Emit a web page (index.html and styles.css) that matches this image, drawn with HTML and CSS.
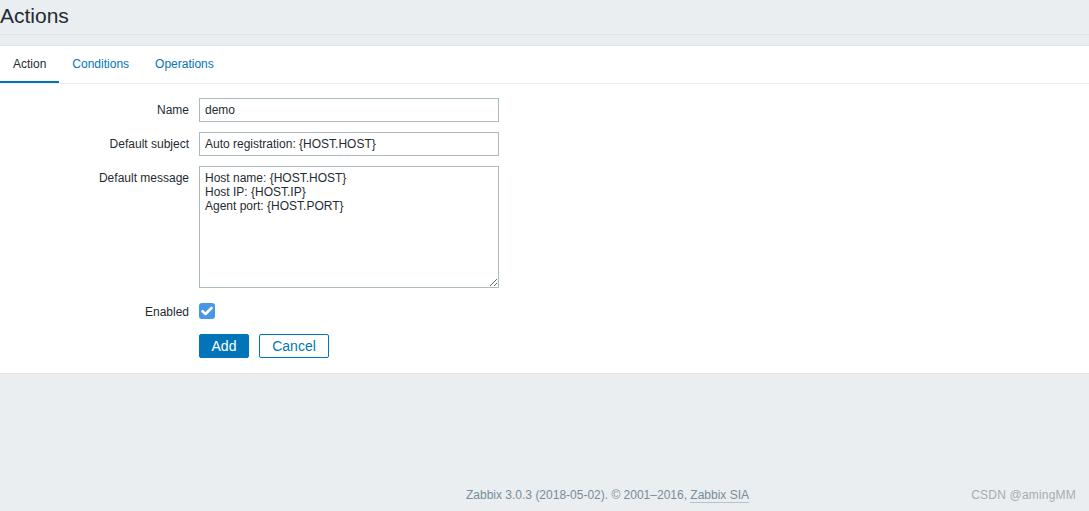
FILE: index.html
```html
<!DOCTYPE html>
<html>
<head>
<meta charset="utf-8">
<link rel="stylesheet" href="styles.css">
</head>
<body>
<div class="page">
  <header class="header"><h1 class="title">Actions</h1></header>
  <main class="panel">
    <nav class="tabs">
      <a class="tab active">Action</a>
      <a class="tab">Conditions</a>
      <a class="tab">Operations</a>
    </nav>
    <form class="form">
      <label class="label">Name</label>
      <input class="input" type="text" value="demo">
      <label class="label">Default subject</label>
      <input class="input" type="text" value="Auto registration: {HOST.HOST}">
      <label class="label top">Default message</label>
      <textarea class="textarea">Host name: {HOST.HOST}
Host IP: {HOST.IP}
Agent port: {HOST.PORT}</textarea>
      <label class="label check-label">Enabled</label>
      <div class="check-wrap">
        <span class="check">
          <svg width="12" height="10" viewBox="0 0 12 10"><path d="M1.5 5.2 L4.5 8 L10.5 2" fill="none" stroke="#fff" stroke-width="2.6" stroke-linecap="round" stroke-linejoin="round"/></svg>
        </span>
      </div>
      <span></span>
      <div class="buttons">
        <button type="button" class="btn primary">Add</button>
        <button type="button" class="btn secondary">Cancel</button>
      </div>
    </form>
  </main>
  <footer class="footer">
    <span class="copy">Zabbix 3.0.3 (2018-05-02). © 2001–2016, <a class="sia">Zabbix SIA</a></span>
    <span class="mark">CSDN @amingMM</span>
  </footer>
</div>
</body>
</html>
```
FILE: styles.css
```css
* { box-sizing: border-box; }
html, body { margin: 0; padding: 0; }
body {
  background: #ebeef0;
  font-family: "Liberation Sans", Arial, sans-serif;
  font-size: 12px;
  color: #1f2c33;
  width: 1089px;
  height: 511px;
  overflow: hidden;
}
.page { display: flex; flex-direction: column; height: 511px; }
.header {
  height: 35px;
  border-bottom: 1px solid #dfe4e7;
  margin-bottom: 10px;
}
.title {
  margin: 0;
  font-weight: normal;
  font-size: 21px;
  line-height: 34px;
  margin-top: -1px;
  color: #1f2c33;
}
.panel {
  background: #fff;
  border-top: 1px solid #dfe4e7;
  border-bottom: 1px solid #dfe4e7;
}
.tabs {
  display: flex;
  height: 38px;
  border-bottom: 1px solid #ebeef0;
}
.tab {
  padding: 0 13px;
  line-height: 37px;
  color: #0275b8;
  border-bottom: 2px solid transparent;
  height: 37px;
  overflow: hidden;
}
.tab.active { color: #1f2c33; border-bottom-color: #0275b8; }
.form {
  display: grid;
  grid-template-columns: 189px 300px;
  column-gap: 10px;
  row-gap: 10px;
  padding: 14px 0 15px 0;
  align-items: center;
}
.label { text-align: right; line-height: 24px; }
.label.top { align-self: start; line-height: 24px; }
.label.check-label { padding-top: 1px; }
.input, .textarea {
  font-family: "Liberation Sans", Arial, sans-serif;
  font-size: 12px;
  color: #1f2c33;
  border: 1px solid #acbbc2;
  background: #fff;
  height: 24px;
  padding: 0 5px;
  width: 300px;
  margin: 0;
  outline: none;
}
.textarea {
  height: 122px;
  padding: 4px 5px;
  line-height: 14px;
  resize: both;
}
.check-wrap { height: 26px; display: flex; align-items: center; }
.check {
  width: 16px; height: 16px;
  background: #4796e8;
  border-radius: 3px;
  display: flex; align-items: center; justify-content: center;
}
.buttons { display: flex; gap: 10px; }
.btn {
  height: 24px;
  font-family: "Liberation Sans", Arial, sans-serif;
  font-size: 14px;
  border-radius: 2px;
  padding: 0;
  margin: 0;
}
.btn.primary { width: 50px; background: #0275b8; color: #fff; border: 1px solid #0275b8; }
.btn.secondary { width: 70px; background: #fff; color: #0275b8; border: 1px solid #0275b8; }
.footer {
  flex: 1;
  display: flex;
  align-items: flex-end;
  padding-bottom: 9px;
}
.copy {
  margin-left: 466px;
  color: #768d99;
  font-size: 12px;
  line-height: 14px;
}
.sia { color: #768d99; border-bottom: 1px solid #b8c3c9; }
.mark {
  margin-left: auto;
  margin-right: 13px;
  color: #a9acae;
  font-size: 12px;
  line-height: 14px;
  letter-spacing: 0.2px;
}
```
